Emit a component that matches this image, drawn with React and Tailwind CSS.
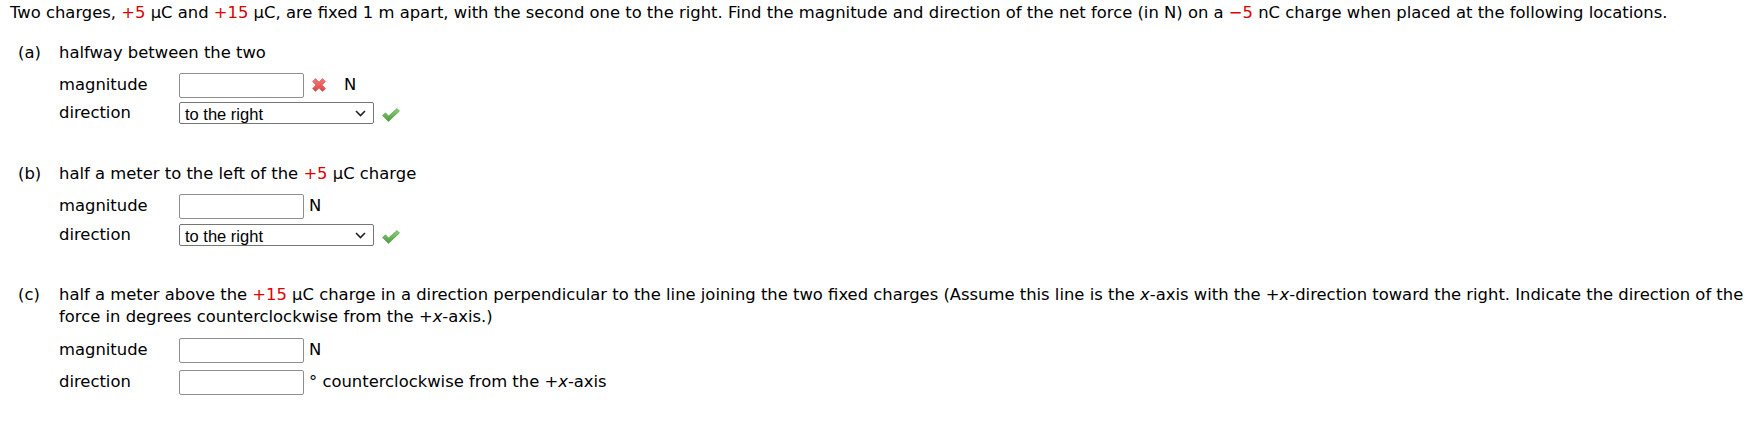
import React from "react";

const R = ({ children }) => <span className="text-[#e00000]">{children}</span>;

function XIcon() {
  return (
    <svg width="18" height="18" viewBox="0 0 18 18" className="block">
      <defs>
        <linearGradient id="xg" x1="0" y1="0" x2="0" y2="1">
          <stop offset="0" stopColor="#f47a7a" />
          <stop offset="1" stopColor="#e04444" />
        </linearGradient>
      </defs>
      <path
        d="M2.5 5.5 L5.5 2.5 L9 6 L12.5 2.5 L15.5 5.5 L12 9 L15.5 12.5 L12.5 15.5 L9 12 L5.5 15.5 L2.5 12.5 L6 9 Z"
        fill="url(#xg)"
        stroke="#d94a4a"
        strokeWidth="0.6"
        strokeLinejoin="round"
      />
    </svg>
  );
}

function CheckIcon() {
  return (
    <svg width="20" height="16" viewBox="0 0 20 16" className="block">
      <defs>
        <linearGradient id="cg" x1="0" y1="0" x2="0" y2="1">
          <stop offset="0" stopColor="#8fd07a" />
          <stop offset="1" stopColor="#4a9a3e" />
        </linearGradient>
      </defs>
      <path
        d="M1.5 8.5 L4.5 5.8 L7.5 9 L16 1.5 L18.5 4 L7.5 14.5 Z"
        fill="url(#cg)"
        stroke="#4f9a45"
        strokeWidth="0.6"
        strokeLinejoin="round"
      />
    </svg>
  );
}

function Input() {
  return (
    <div className="w-[125px] h-[25px] border border-[#8f8f8f] rounded-[2px] bg-white shrink-0" />
  );
}

function Select() {
  return (
    <div className="relative w-[195px] h-[22px] border border-[#767676] rounded-[2px] bg-white shrink-0 flex items-center pl-[5px] font-['Liberation_Sans',Arial,sans-serif] text-[16.5px] text-black leading-none">
      <span className="mt-[2px]">to the right</span>
      <svg width="11" height="7" viewBox="0 0 11 7" className="absolute right-[7px] top-[7px]">
        <path d="M1 1 L5.5 5.5 L10 1" fill="none" stroke="#222" strokeWidth="1.6" />
      </svg>
    </div>
  );
}

function Label({ children }) {
  return <div className="w-[120px] shrink-0">{children}</div>;
}

export default function App() {
  return (
    <div className="w-[1752px] h-[422px] bg-white text-black font-['DejaVu_Sans',Verdana,sans-serif] text-[16.4px] leading-[22px] pl-[10px] pr-[4px] pt-[2px]">
      <p>
        Two charges, <R>+5</R> μC and <R>+15</R> μC, are fixed 1 m apart, with the second one to the right. Find
        the magnitude and direction of the net force (in N) on a <R>−5</R> nC charge when placed at the following
        locations.
      </p>

      {/* (a) */}
      <div className="flex mt-[18px]">
        <div className="w-[49px] shrink-0 pl-[8px]">(a)</div>
        <div className="flex-1">
          <div>halfway between the two</div>
          <div className="flex items-center mt-[8px] h-[26px]">
            <Label>magnitude</Label>
            <Input />
            <div className="ml-[6px]">
              <XIcon />
            </div>
            <span className="ml-[16px]">N</span>
          </div>
          <div className="flex items-center mt-[4px] h-[22px]">
            <Label>direction</Label>
            <Select />
            <div className="ml-[7px] mt-[4px]">
              <CheckIcon />
            </div>
          </div>
        </div>
      </div>

      {/* (b) */}
      <div className="flex mt-[39px]">
        <div className="w-[49px] shrink-0 pl-[8px]">(b)</div>
        <div className="flex-1">
          <div>
            half a meter to the left of the <R>+5</R> μC charge
          </div>
          <div className="flex items-center mt-[8px] h-[26px]">
            <Label>magnitude</Label>
            <Input />
            <span className="ml-[5px]">N</span>
          </div>
          <div className="flex items-center mt-[5px] h-[22px]">
            <Label>direction</Label>
            <Select />
            <div className="ml-[7px] mt-[4px]">
              <CheckIcon />
            </div>
          </div>
        </div>
      </div>

      {/* (c) */}
      <div className="flex mt-[38px]">
        <div className="w-[49px] shrink-0 pl-[8px]">(c)</div>
        <div className="flex-1">
          <div>
            half a meter above the <R>+15</R> μC charge in a direction perpendicular to the line joining the two
            fixed charges (Assume this line is the <i>x</i>-axis with the +<i>x</i>-direction toward the right.
            Indicate the direction of the force in degrees counterclockwise from the +<i>x</i>-axis.)
          </div>
          <div className="flex items-center mt-[9px] h-[26px]">
            <Label>magnitude</Label>
            <Input />
            <span className="ml-[5px]">N</span>
          </div>
          <div className="flex items-center mt-[6px] h-[26px]">
            <Label>direction</Label>
            <Input />
            <span className="ml-[5px]">° counterclockwise from the +<i>x</i>-axis</span>
          </div>
        </div>
      </div>
    </div>
  );
}
